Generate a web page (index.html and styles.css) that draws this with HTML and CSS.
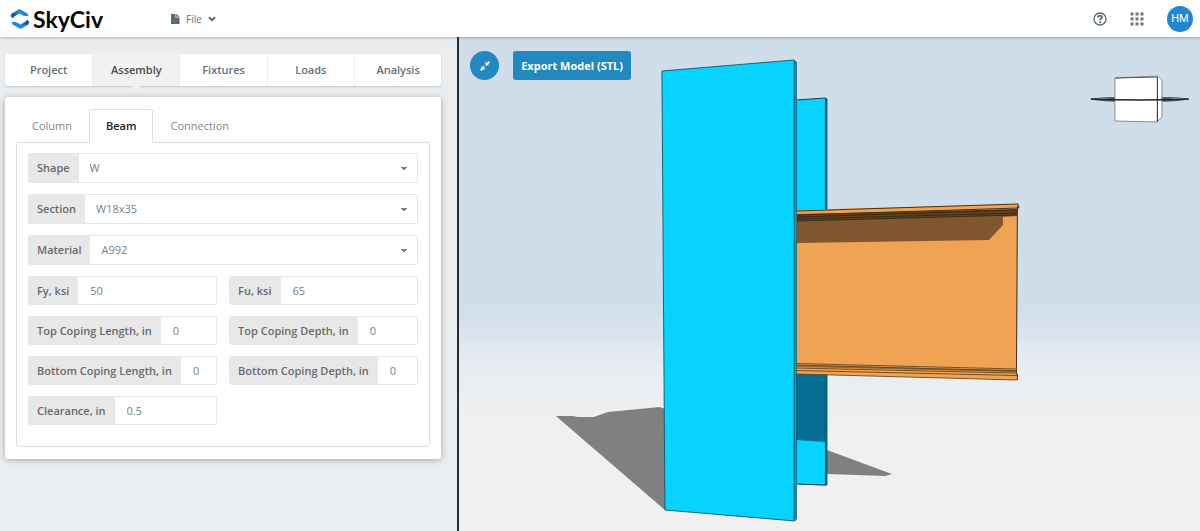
FILE: index.html
```html
<!DOCTYPE html>
<html lang="en">
<head>
<meta charset="utf-8">
<title>SkyCiv Connection Design</title>
<link rel="stylesheet" href="styles.css">
</head>
<body>
<header class="topbar">
  <a class="brand" href="#">
    <svg class="brand-mark" viewBox="0 0 20 22" aria-hidden="true">
      <path d="M1.500 8.500V5.500L9.500 1L17.500 5.500L18.500 8L14 8L9.500 5.500L5 8Z" fill="#2389e4"/>
      <path d="M.5 8L2 5.200L8.500 5.500L4.500 8.200L3 10.500Z" fill="#1559bd"/>
      <path d="M18.500 13.500V16.500L10.500 21L2.500 16.500L1.500 14L6 14L10.500 16.500L15 14Z" fill="#2389e4"/>
      <path d="M19.500 14L18 16.800L11.500 16.500L15.500 13.800L17 11.500Z" fill="#1559bd"/>
    </svg>
    <span>SkyCiv</span>
  </a>
  <button class="file-menu" type="button">
    <svg width="10" height="12" viewBox="0 0 10 12" aria-hidden="true"><path d="M1 1H5.500V4.500H9.500V11H1Z M6.300 .8L9.500 3.800H6.300Z" fill="#5a6b75"/></svg>
    <span>File</span>
    <svg width="8" height="6" viewBox="0 0 8 6" aria-hidden="true"><path d="M1 1.200L4 4.200L7 1.200" fill="none" stroke="#4d5c65" stroke-width="1.800"/></svg>
  </button>
  <div class="tools">
    <button class="tool" type="button" aria-label="Help">
      <svg width="14" height="14" viewBox="0 0 14 14"><circle cx="7" cy="7" r="6" fill="none" stroke="#546a74" stroke-width="1.300"/><path d="M4.900 5.500C5 3 9 3 9 5.300C9 6.800 7.100 6.600 7.100 8.300" fill="none" stroke="#546a74" stroke-width="1.700"/><circle cx="7.100" cy="10.300" r="1" fill="#546a74"/></svg>
    </button>
    <button class="tool" type="button" aria-label="Apps">
      <svg width="14" height="14" viewBox="0 0 14 14" fill="#757575"><path d="M.5 .5h3v3h-3zM5.500 .5h3v3h-3zM10.500 .5h3v3h-3zM.5 5.500h3v3h-3zM5.500 5.500h3v3h-3zM10.500 5.500h3v3h-3zM.5 10.500h3v3h-3zM5.500 10.500h3v3h-3zM10.500 10.500h3v3h-3z"/></svg>
    </button>
    <button class="avatar" type="button">HM</button>
  </div>
</header>
<main class="workspace">
  <section class="sidebar">
    <nav class="steps">
      <a class="step" href="#">Project</a>
      <a class="step step-active" href="#">Assembly</a>
      <a class="step" href="#">Fixtures</a>
      <a class="step" href="#">Loads</a>
      <a class="step" href="#">Analysis</a>
    </nav>
    <div class="panel">
      <nav class="tabs">
        <a class="tab" href="#">Column</a>
        <a class="tab tab-active" href="#">Beam</a>
        <a class="tab" href="#">Connection</a>
      </nav>
      <form class="fields">
        <div class="field field-wide"><label for="shape">Shape</label><select id="shape"><option>W</option></select></div>
        <div class="field field-wide"><label for="section">Section</label><select id="section"><option>W18x35</option></select></div>
        <div class="field field-wide"><label for="material">Material</label><select id="material"><option>A992</option></select></div>
        <div class="field"><label for="fy">Fy, ksi</label><input id="fy" type="text" value="50"></div>
        <div class="field"><label for="fu">Fu, ksi</label><input id="fu" type="text" value="65"></div>
        <div class="field"><label for="tcl">Top Coping Length, in</label><input id="tcl" type="text" value="0"></div>
        <div class="field"><label for="tcd">Top Coping Depth, in</label><input id="tcd" type="text" value="0"></div>
        <div class="field"><label for="bcl">Bottom Coping Length, in</label><input id="bcl" type="text" value="0"></div>
        <div class="field"><label for="bcd">Bottom Coping Depth, in</label><input id="bcd" type="text" value="0"></div>
        <div class="field"><label for="clr">Clearance, in</label><input id="clr" type="text" value="0.5"></div>
      </form>
    </div>
  </section>
  <section class="viewer">
    <svg class="scene" viewBox="459 37 741 494" preserveAspectRatio="xMidYMid slice" role="img" aria-label="3D model of beam to column connection">
      <path d="M556 416L573 416L578 417L594 417L608 412L660 407L665 409V510Z" fill="#808080"/>
      <path d="M827 450L892 474L885 476L827 474Z" fill="#808080"/>
      <path d="M796 100L826 98V486L796 484Z" fill="#06d3ff"/>
      <path d="M796 374H826V442L796 440Z" fill="#066e93"/>
      <path d="M796 100L825 98L827 99V485L796 484" fill="none" stroke="#17424b"/>
      <path d="M826 98V485" stroke="#076077" stroke-width="2"/>
      <path d="M662 71L794 60L796.500 62V519L795 521L665 510Z" fill="#06d3ff" stroke="#17424b" stroke-width=".8"/>
      <path d="M794.300 61V520" stroke="#074b5c" stroke-width="1"/>
      <path d="M796 62V519" stroke="#06899f" stroke-width="1.200"/>
      <path d="M797 210L1018 204L1018 208L1017 380L797 374Z" fill="#f0a353"/>
      <path d="M797 216L1017 210V216L1003 217V225L989 240L797 243Z" fill="#7e562f"/>
      <path d="M797 214L1018 209L1017 215L797 221Z" fill="#62421f"/>
      <path d="M797 211L1018 204L1019 208L797 215" fill="none" stroke="#493018"/>
      <path d="M797 217L1017 210M797 219L1017 213M797 221L1017 215" stroke="#33230f" stroke-width=".8"/>
      <path d="M797 365L1016 370V372L797 367Z" fill="#9b6d32"/>
      <path d="M797 363.500L1016 369M797 365L1016 371M797 368L1016 373M797 370.500L1017 375.500M797 374L1017 380" stroke="#573916" stroke-width=".8"/>
      <path d="M1017.500 206L1016.500 374H1017.500V380" fill="none" stroke="#49331e" stroke-width="1"/>
      <g>
        <path d="M1091 99Q1104 96 1140 97Q1176 96 1189 99Q1176 103 1140 101Q1104 103 1091 99Z" fill="#545b61"/>
        <path d="M1097 99Q1103 98 1108 99M1171 99Q1177 98 1184 99" stroke="#b5c0ca" fill="none"/>
        <path d="M1115 78L1158 76L1162 80V117L1157 122L1115 121Z" fill="#fff" stroke="#8a9095"/>
        <path d="M1157.500 77V122" stroke="#444" stroke-width="1.200"/>
        <path d="M1115 78L1158 77" stroke="#555"/>
        <path d="M1091 99Q1140 101 1189 99" fill="none" stroke="#222" stroke-width="1.400"/>
      </g>
    </svg>
    <div class="viewer-actions">
      <button class="collapse" type="button" aria-label="Collapse view">
        <svg width="12" height="12" viewBox="0 0 12 12" fill="#fff"><path d="M6.400 1.800V5.600H10.200L9 4.400L11 2.400L9.600 1L7.600 3ZM5.600 10.200V6.400H1.800L3 7.600L1 9.600L2.400 11L4.400 9Z"/></svg>
      </button>
      <button class="export" type="button">Export Model (STL)</button>
    </div>
  </section>
</main>
</body>
</html>
```
FILE: styles.css
```css
* { box-sizing: border-box; }
body {
  margin: 0;
  min-height: 100vh;
  display: flex;
  flex-direction: column;
  font: 11px/18px "Open Sans", "Noto Sans", sans-serif;
  color: #64717a;
  background: #eaeef1;
}
a { color: inherit; text-decoration: none; }
button, input, select { font: inherit; color: inherit; }
button { border: 0; padding: 0; background: none; }
.topbar {
  position: relative;
  z-index: 1;
  display: flex;
  align-items: center;
  min-height: 37px;
  padding: 0 7px 0 10px;
  background: #fff;
  box-shadow: 0 1px 3px rgba(0, 0, 0, .25);
}
.brand {
  display: flex;
  align-items: center;
  gap: 3px;
  width: 160px;
  color: #080808;
  font: 700 23px/32px Lato, sans-serif;
}
.brand-mark { width: 20px; height: 22px; }
.file-menu { display: flex; align-items: center; gap: 6px; font-size: 10px; }
.tools { display: flex; align-items: center; gap: 23px; margin-left: auto; }
.tool { display: flex; }
.avatar {
  width: 26px;
  height: 26px;
  border-radius: 50%;
  background: #2386d1;
  color: #fff;
  font: 11px/26px Roboto, sans-serif;
}
.workspace { flex: 1; display: grid; grid-template-columns: minmax(440px, 38.1%) 1fr; }
.sidebar { padding: 17px 16px 16px 5px; }
.steps {
  display: grid;
  grid-template-columns: repeat(5, 1fr);
  border-radius: 3px;
  background: #fff;
  box-shadow: 0 1px 2px rgba(34, 36, 38, .2);
}
.step {
  position: relative;
  padding: 7px 0;
  border-left: 1px solid #ececec;
  text-align: center;
  font-weight: 600;
}
.step:first-child { border-left: 0; }
.step-active { background: #f1f1f1; color: #4c4c4c; }
.step-active::after {
  content: "";
  position: absolute;
  left: calc(50% - 3px);
  bottom: -3px;
  width: 6px;
  height: 6px;
  background: #f1f1f1;
  transform: rotate(45deg);
}
.panel {
  margin-top: 11px;
  padding: 12px 11px;
  border-radius: 3px;
  background: #fff;
  box-shadow: 0 1px 6px rgba(0, 0, 0, .3);
}
.tabs { display: flex; }
.tab { padding: 7px 16px; border: 1px solid transparent; border-bottom: 0; color: #858585; }
.tab:first-child { padding-left: 15px; }
.tab-active {
  position: relative;
  z-index: 1;
  margin-bottom: -1px;
  border-color: #dedede;
  border-radius: 3px 3px 0 0;
  background: #fff;
  color: #222;
  font-weight: 600;
}
.fields {
  display: grid;
  grid-template-columns: 1fr 1fr;
  gap: 11px 12px;
  padding: 10px 11px 21px;
  border: 1px solid #dedede;
  border-radius: 0 0 3px 3px;
}
.field { display: flex; min-width: 0; height: 29px; }
.field-wide { grid-column: 1 / -1; height: 30px; }
.field label {
  display: flex;
  align-items: center;
  padding: 0 9px;
  border-radius: 3px 0 0 3px;
  background: #e8e8e8;
  color: #6a6a6a;
  font-weight: 600;
  white-space: nowrap;
}
.field input, .field select {
  flex: 1;
  width: 0;
  min-width: 0;
  padding: 0 12px;
  border: 1px solid #e6e6e6;
  border-left-width: 0;
  border-radius: 0 3px 3px 0;
  background: #fff;
  color: #74808a;
}
.field select {
  appearance: none;
  padding: 0 11px;
  background: conic-gradient(from 315deg at 50% 3px, #75858b 90deg, transparent 0) no-repeat right 10px center / 6px 3px, #fff;
}
.viewer {
  position: relative;
  border-left: 2px solid #292c30;
  background: linear-gradient(#d0deeb, #d0deeb 55%, #e9edf1 67%, #f0f0f0 80%);
  overflow: hidden;
}
.scene { position: absolute; inset: 0; width: 100%; height: 100%; }
.viewer-actions { position: relative; display: flex; align-items: center; gap: 14px; padding: 14px 11px; }
.collapse {
  display: grid;
  place-items: center;
  width: 29px;
  height: 29px;
  border-radius: 50%;
  background: #2188c0;
}
.export {
  height: 29px;
  padding: 0 8px;
  border-radius: 3px;
  background: #2188c0;
  color: #fff;
  font-weight: 700;
}
```
